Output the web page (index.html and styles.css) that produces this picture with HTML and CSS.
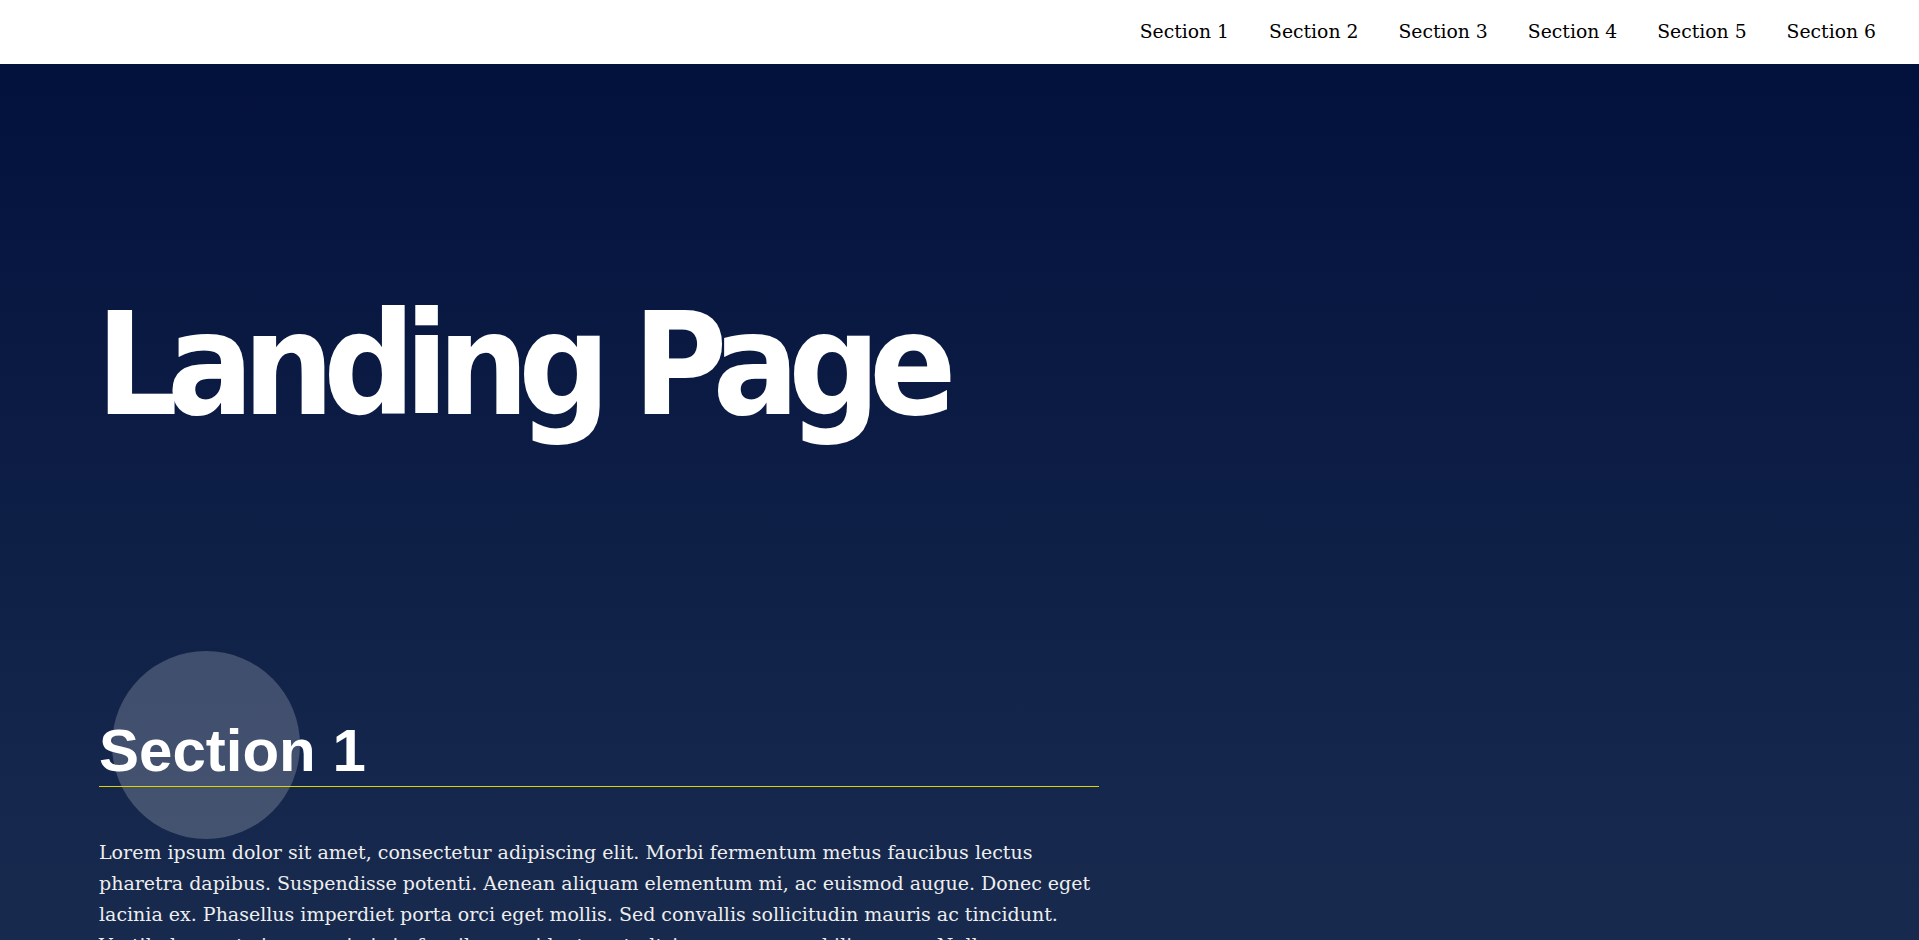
FILE: index.html
```html
<!DOCTYPE html>
<html lang="en">
    <head>
        <meta charset="UTF-8" />
        <meta name="viewport" content="width=device-width, initial-scale=1.0" />
        <title>Landing Page</title>
        <link rel="stylesheet" href="styles.css">
    </head>
    <body>
        <!-- navigation -->
        <header class="page-header">
            <nav class="navbar">
                <ul class="navbar-list">
                    <li><a class="navbar-link" href="#section1">Section 1</a></li>
                    <li><a class="navbar-link" href="#section2">Section 2</a></li>
                    <li><a class="navbar-link" href="#section3">Section 3</a></li>
                    <li><a class="navbar-link" href="#section4">Section 4</a></li>
                    <li><a class="navbar-link" href="#section5">Section 5</a></li>
                    <li><a class="navbar-link" href="#section6">Section 6</a></li>
                </ul>
            </nav>
        </header>

        <main class="main">
            <!-- hero -->
            <section class="main-hero">
                <h1 class="hero-title">Landing Page</h1>
            </section>

            <section id="section1" class="landing-section">
                <div class="landing-container">
                    <h2 class="section-title">Section 1</h2>
                    <p class="section-text">Lorem ipsum dolor sit amet, consectetur adipiscing elit. Morbi fermentum metus faucibus lectus pharetra dapibus. Suspendisse potenti. Aenean aliquam elementum mi, ac euismod augue. Donec eget lacinia ex. Phasellus imperdiet porta orci eget mollis. Sed convallis sollicitudin mauris ac tincidunt. Vestibulum ante ipsum primis in faucibus orci luctus et ultrices posuere cubilia curae; Nullam nec pulvinar lorem.</p>
                    <p class="section-text">Aliquam a convallis justo. Vivamus venenatis, erat eget pulvinar gravida, ipsum lacus aliquet velit, vel luctus diam ipsum a diam. Cras eu tincidunt arcu, vitae rhoncus purus.</p>
                </div>
            </section>

            <section id="section2" class="landing-section">
                <div class="landing-container">
                    <h2 class="section-title">Section 2</h2>
                    <p class="section-text">Lorem ipsum dolor sit amet, consectetur adipiscing elit. Morbi fermentum metus faucibus lectus pharetra dapibus. Suspendisse potenti. Aenean aliquam elementum mi, ac euismod augue.</p>
                </div>
            </section>

            <section id="section3" class="landing-section">
                <div class="landing-container">
                    <h2 class="section-title">Section 3</h2>
                    <p class="section-text">Lorem ipsum dolor sit amet, consectetur adipiscing elit. Morbi fermentum metus faucibus lectus pharetra dapibus. Suspendisse potenti. Aenean aliquam elementum mi, ac euismod augue.</p>
                </div>
            </section>

            <section id="section4" class="landing-section">
                <div class="landing-container">
                    <h2 class="section-title">Section 4</h2>
                    <p class="section-text">Lorem ipsum dolor sit amet, consectetur adipiscing elit. Morbi fermentum metus faucibus lectus pharetra dapibus. Suspendisse potenti. Aenean aliquam elementum mi, ac euismod augue.</p>
                </div>
            </section>
        </main>
    </body>
</html>
```

FILE: styles.css
```css
:root {
    --navy-top: #010f3b;
    --navy-bottom: #172a4e;
    --accent: #e0d400;
}

* {
    margin: 0;
    padding: 0;
    box-sizing: border-box;
}

body {
    font-family: "DejaVu Serif", "Liberation Serif", serif;
    color: #fff;
    background: var(--navy-bottom);
}

/* navigation */
.page-header {
    position: fixed;
    top: 0;
    left: 0;
    right: 0;
    height: 64px;
    background: #fff;
    z-index: 10;
}

.navbar {
    height: 100%;
}

.navbar-list {
    display: flex;
    justify-content: flex-end;
    list-style: none;
    height: 100%;
    padding-right: 23px;
}

.navbar-link {
    display: block;
    padding: 20px 20px;
    font-size: 18.8px;
    line-height: 24px;
    color: #000;
    text-decoration: none;
}

/* main */
.main {
    padding-top: 64px;
    background: linear-gradient(var(--navy-top) 0, var(--navy-bottom) 900px, #1f3156 100%);
}

.main-hero {
    height: 540px;
    padding: 229px 99px 0;
}

.hero-title {
    font-family: "DejaVu Sans", sans-serif;
    font-stretch: condensed;
    font-weight: 700;
    font-size: 143px;
    letter-spacing: -11px;
    line-height: 1;
    margin-left: -3px;
}

/* sections */
.landing-section {
    padding: 47px 99px 80px;
}

.landing-container {
    position: relative;
    max-width: 1000px;
}

.landing-container::before {
    content: "";
    position: absolute;
    left: 13px;
    top: 0;
    width: 188px;
    height: 188px;
    border-radius: 50%;
    background: rgba(255, 255, 255, 0.2);
}

.section-title {
    position: relative;
    font-family: "Liberation Sans", Arial, sans-serif;
    font-size: 60px;
    line-height: 1;
    padding: 70px 0 5px;
    border-bottom: 1px solid var(--accent);
    margin-bottom: 50px;
}

.section-text {
    position: relative;
    font-size: 19px;
    line-height: 31px;
    color: #eee;
    margin-bottom: 20px;
}
```
